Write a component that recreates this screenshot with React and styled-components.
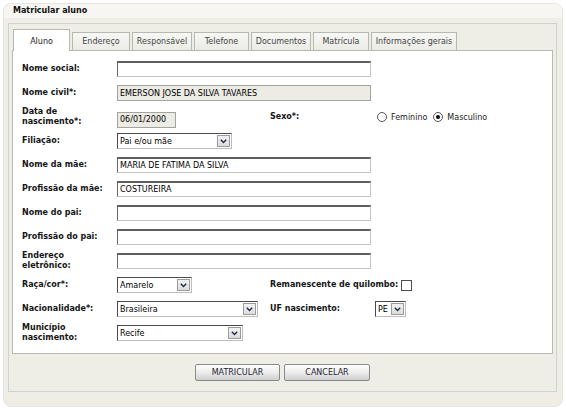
import React from "react";
import styled, { createGlobalStyle, css } from "styled-components";

const GlobalStyle = createGlobalStyle`
  body {
    margin: 0;
    background: #ffffff;
    font-family: "DejaVu Sans", Verdana, sans-serif;
    color: #1b1b1b;
  }
`;

const Panel = styled.div`
  margin: 3px;
  width: 560px;
  height: 404px;
  box-sizing: border-box;
  background: #eeede6;
  border: 1px solid #e6e5de;
  border-radius: 8px;
  overflow: hidden;
  display: flex;
  flex-direction: column;
`;

const TitleBar = styled.div`
  height: 14px;
  background: #f7f6f2;
  padding-left: 9px;
  font-size: 8px;
  font-weight: bold;
  line-height: 14px;
  color: #111;
`;

const Frame = styled.div`
  margin: 5px 5px 0 4px;
  height: 369px;
  box-sizing: border-box;
  border: 1px solid #cfd2d2;
  padding: 5px 3px 0 3px;
  display: flex;
  flex-direction: column;
`;

const Tabs = styled.div`
  display: flex;
  align-items: flex-end;
  gap: 2px;
  height: 21px;
  padding-left: 1px;
  position: relative;
  z-index: 1;
`;

const Tab = styled.div`
  box-sizing: border-box;
  width: ${(p) => p.$w}px;
  height: 18px;
  border: 1px solid #b8b8b3;
  border-bottom: none;
  background: linear-gradient(#f7f7f4, #ebebe6);
  font-size: 8px;
  color: #444;
  display: flex;
  align-items: center;
  justify-content: center;
  ${(p) =>
    p.$active &&
    css`
      height: 22px;
      margin-bottom: -1px;
      background: #ffffff;
      color: #222;
      padding-top: 1px;
    `}
`;

const Content = styled.div`
  height: 304px;
  box-sizing: border-box;
  background: #ffffff;
  border: 1px solid #b8b8b3;
  padding: 8px 9px;
  display: flex;
  flex-direction: column;
  gap: 4px;
`;

const Row = styled.div`
  display: grid;
  grid-template-columns: 95px 153px 105px 1fr;
  align-items: center;
  height: 20px;
`;

const Label = styled.label`
  font-size: 8px;
  font-weight: bold;
  line-height: 10px;
  color: #151515;
  white-space: nowrap;
`;

const Wide = styled.div`
  grid-column: 2 / span 3;
  display: flex;
  align-items: center;
`;

const Side = styled.div`
  grid-column: 3 / span 2;
  display: flex;
  align-items: center;
  gap: 3px;
`;

const TextInput = styled.input`
  box-sizing: border-box;
  width: ${(p) => p.$w}px;
  height: 16px;
  margin: 0;
  padding: 0 2px;
  font-family: inherit;
  font-size: 8px;
  color: #000;
  outline: none;
  border: 1px solid;
  border-color: #5e5e5e #c4c4c4 #c4c4c4 #6a6a6a;
  border-top-width: 2px;
  background: #fff;
  &:read-only {
    background: #ecebe4;
    border: 1px solid #a3a3a0;
  }
`;

const SelectBox = styled.div`
  box-sizing: border-box;
  width: ${(p) => p.$w}px;
  height: 16px;
  display: flex;
  align-items: stretch;
  border: 1px solid;
  border-color: #4a4a4a #bdbdbd #bdbdbd #4a4a4a;
  background: #fff;
`;

const NativeSelect = styled.select`
  flex: 1;
  min-width: 0;
  appearance: none;
  border: none;
  outline: none;
  margin: 0;
  padding: 0 2px;
  background: transparent;
  font-family: inherit;
  font-size: 8px;
  color: #000;
`;

const ArrowButton = styled.span`
  width: 13px;
  margin: 1px;
  box-sizing: border-box;
  border: 1px solid #9c9ca0;
  background: linear-gradient(#f2f2f2, #dcdcdc);
  display: flex;
  align-items: center;
  justify-content: center;
`;

const SideLabel = styled(Label)`
  grid-column: 3;
`;

const RadioGroup = styled.div`
  grid-column: 4;
  display: flex;
  align-items: center;
  gap: 6px;
  margin-left: 2px;
`;

const RadioOption = styled.span`
  display: flex;
  align-items: center;
  gap: 4px;
  font-size: 8px;
  color: #222;
`;

const RadioCircle = styled.span`
  width: 10px;
  height: 10px;
  box-sizing: border-box;
  border-radius: 50%;
  border: 1px solid #555;
  background: #fff;
  display: flex;
  align-items: center;
  justify-content: center;
  &::after {
    content: "";
    width: 4px;
    height: 4px;
    border-radius: 50%;
    background: ${(p) => (p.$checked ? "#000" : "transparent")};
  }
`;

const Checkbox = styled.span`
  width: 11px;
  height: 11px;
  box-sizing: border-box;
  border: 1px solid #4d4d4d;
  background: #fff;
`;

const RightControl = styled.div`
  grid-column: 4;
  display: flex;
`;

const ButtonBar = styled.div`
  flex: 1;
  display: flex;
  align-items: center;
  justify-content: center;
  gap: 4px;
  padding-bottom: 1px;
`;

const Button = styled.button`
  width: ${(p) => p.$w}px;
  height: 17px;
  margin: 0;
  padding: 0;
  border: 1px solid #8a8a8a;
  border-radius: 2px;
  background: linear-gradient(#ffffff, #e9e9e9 55%, #cfcfcf);
  font-family: inherit;
  font-size: 8px;
  color: #1f2433;
  cursor: pointer;
`;

const Chevron = () => (
  <svg width="7" height="5" viewBox="0 0 7 5">
    <path d="M0.8 0.8 L3.5 3.6 L6.2 0.8" fill="none" stroke="#1e2a44" strokeWidth="1.4" />
  </svg>
);

const Select = ({ w, value }) => (
  <SelectBox $w={w}>
    <NativeSelect defaultValue={value}>
      <option>{value}</option>
    </NativeSelect>
    <ArrowButton>
      <Chevron />
    </ArrowButton>
  </SelectBox>
);

const tabs = [
  ["Aluno", 57],
  ["Endereço", 58],
  ["Responsável", 60],
  ["Telefone", 55],
  ["Documentos", 60],
  ["Matrícula", 56],
  ["Informações gerais", 86],
];

const TextRow = ({ label, value = "", readOnly, w = 254 }) => (
  <Row>
    <Label>{label}</Label>
    <Wide>
      <TextInput $w={w} defaultValue={value} readOnly={readOnly} />
    </Wide>
  </Row>
);

export default function App() {
  return (
    <>
      <GlobalStyle />
      <Panel>
        <TitleBar>Matricular aluno</TitleBar>
        <Frame>
          <Tabs>
            {tabs.map(([name, w], i) => (
              <Tab key={name} $w={w} $active={i === 0}>
                {name}
              </Tab>
            ))}
          </Tabs>
          <Content>
            <TextRow label="Nome social:" />
            <TextRow label="Nome civil*:" value="EMERSON JOSE DA SILVA TAVARES" readOnly />
            <Row>
              <Label>
                Data de
                <br />
                nascimento*:
              </Label>
              <div>
                <TextInput $w={59} defaultValue="06/01/2000" readOnly />
              </div>
              <SideLabel>Sexo*:</SideLabel>
              <RadioGroup>
                <RadioOption>
                  <RadioCircle />
                  Feminino
                </RadioOption>
                <RadioOption>
                  <RadioCircle $checked />
                  Masculino
                </RadioOption>
              </RadioGroup>
            </Row>
            <Row>
              <Label>Filiação:</Label>
              <Wide>
                <Select w={115} value="Pai e/ou mãe" />
              </Wide>
            </Row>
            <TextRow label="Nome da mãe:" value="MARIA DE FATIMA DA SILVA" />
            <TextRow label="Profissão da mãe:" value="COSTUREIRA" />
            <TextRow label="Nome do pai:" />
            <TextRow label="Profissão do pai:" />
            <TextRow
              label={
                <>
                  Endereço
                  <br />
                  eletrônico:
                </>
              }
            />
            <Row>
              <Label>Raça/cor*:</Label>
              <div>
                <Select w={75} value="Amarelo" />
              </div>
              <Side>
                <Label>Remanescente de quilombo:</Label>
                <Checkbox />
              </Side>
            </Row>
            <Row>
              <Label>Nacionalidade*:</Label>
              <div>
                <Select w={141} value="Brasileira" />
              </div>
              <SideLabel>UF nascimento:</SideLabel>
              <RightControl>
                <Select w={31} value="PE" />
              </RightControl>
            </Row>
            <Row>
              <Label>
                Município
                <br />
                nascimento:
              </Label>
              <Wide>
                <Select w={126} value="Recife" />
              </Wide>
            </Row>
          </Content>
          <ButtonBar>
            <Button $w={85}>MATRICULAR</Button>
            <Button $w={86}>CANCELAR</Button>
          </ButtonBar>
        </Frame>
      </Panel>
    </>
  );
}
